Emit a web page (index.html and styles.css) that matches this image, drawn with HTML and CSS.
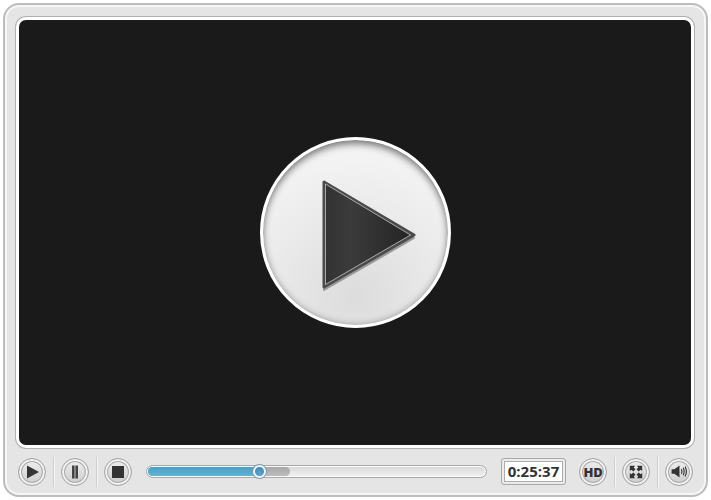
FILE: index.html
```html
<!DOCTYPE html>
<html>
<head>
    <title>Video Player</title>
    <meta charset="UTF-8">
    <link rel="stylesheet" href="styles.css">
</head>
<body>
    <div class="player">
        <div class="screen">
            <div class="big-play">
                <svg viewBox="0 0 100 115" width="100" height="115">
                    <defs>
                        <linearGradient id="tri" x1="0" x2="1" y1="0" y2="0">
                            <stop offset="0" stop-color="#333232"/>
                            <stop offset="0.3" stop-color="#3c3b3b"/>
                            <stop offset="1" stop-color="#242424"/>
                        </linearGradient>
                    </defs>
                    <path d="M4 7 L94 60 L4 112 Z" fill="#9a9a9a" stroke="#9a9a9a" stroke-width="2" stroke-linejoin="round"/>
                    <path d="M4 4 L94 57 L4 109 Z" fill="#4b4b4b" stroke="#4b4b4b" stroke-width="3" stroke-linejoin="round"/>
                    <path d="M5.5 6 L90.5 57 L5.5 106.5 Z" fill="url(#tri)" stroke="#c4c4c4" stroke-width="0.8" stroke-linejoin="round"/>
                </svg>
            </div>
        </div>
        <div class="controls">
            <div class="btn">
                <svg viewBox="0 0 16 16"><path d="M3 1.5 L15 8 L3 14.5 Z" fill="#333"/></svg>
            </div>
            <div class="sep"></div>
            <div class="btn">
                <svg viewBox="0 0 16 16"><path d="M5 1.5 H7.6 V14.5 H5 Z M8.4 1.5 H11 V14.5 H8.4 Z" fill="#444"/></svg>
            </div>
            <div class="sep"></div>
            <div class="btn">
                <svg viewBox="0 0 16 16"><rect x="2" y="2" width="12" height="12" fill="#333"/></svg>
            </div>
            <div class="progress">
                <div class="buffered" style="width: 42%"></div>
                <div class="played" style="width: 33.2%"></div>
                <div class="knob" style="left: 33.2%"></div>
            </div>
            <div class="time">0:25:37</div>
            <div class="btn hd">HD</div>
            <div class="sep"></div>
            <div class="btn">
                <svg viewBox="-1 -1 18 18" fill="#333">
                    <path d="M1 1 H7 L5.4 2.8 L7.4 5 L5 7.4 L2.8 5.4 L1 7 Z"/>
                    <path d="M15 1 H9 L10.6 2.8 L8.6 5 L11 7.4 L13.2 5.4 L15 7 Z"/>
                    <path d="M1 15 H7 L5.4 13.2 L7.4 11 L5 8.6 L2.8 10.6 L1 9 Z"/>
                    <path d="M15 15 H9 L10.6 13.2 L8.6 11 L11 8.6 L13.2 10.6 L15 9 Z"/>
                </svg>
            </div>
            <div class="sep"></div>
            <div class="btn">
                <svg class="wide" viewBox="0 0 18 14">
                    <path d="M0.5 4.5 H3.5 L9 0.5 V13.5 L3.5 9.5 H0.5 Z" fill="#333"/>
                    <path d="M11 4.5 Q12.2 7 11 9.5 M13 3 Q15 7 13 11 M15 1.5 Q17.8 7 15 12.5" fill="none" stroke="#333" stroke-width="1.2"/>
                </svg>
            </div>
        </div>
    </div>
</body>
</html>
```

FILE: styles.css
```css
body {
    margin: 0;
    background-color: #fff;
    font-family: "Open Sans", sans-serif;
}

.player {
    width: 705px;
    height: 494px;
    margin: 3px;
    padding: 12px 12px 0 11px;
    box-sizing: border-box;
    border: 2px solid #bdbdbd;
    border-radius: 16px;
    background-color: #e5e5e5;
    box-shadow: inset 0 0 0 2px #f6f6f6;
}

.screen {
    position: relative;
    height: 425px;
    background-color: #1a1a1a;
    border: 3px solid #fff;
    border-radius: 10px;
    box-shadow: 0 0 0 1px #b0b0b0;
}

.big-play {
    position: absolute;
    left: 241px;
    top: 117px;
    width: 191px;
    height: 191px;
    box-sizing: border-box;
    border: 3px solid #fff;
    border-radius: 50%;
    background: radial-gradient(circle at 50% 85%, #dcdcdc 0%, #e8e8e8 40%, #f4f4f4 80%);
    box-shadow: inset 0 6px 9px -3px #777, inset 0 0 7px #999;
}

.big-play svg {
    position: absolute;
    left: 57px;
    top: 38px;
}

.controls {
    display: flex;
    align-items: center;
    gap: 7px;
    height: 43px;
    margin-top: 2px;
    padding: 0 1px 0 2px;
}

.btn {
    flex: none;
    width: 28px;
    height: 28px;
    box-sizing: border-box;
    border: 1px solid #a4a4a4;
    border-radius: 50%;
    background: linear-gradient(#f0f0f0, #cbcbcb);
    box-shadow: inset 0 0 0 2px #f4f4f4, inset 0 0 0 3px #adadad;
    display: flex;
    align-items: center;
    justify-content: center;
}

.btn svg {
    flex: none;
    width: 16px;
    height: 16px;
}

.btn svg.wide {
    width: 17px;
    height: 13px;
}

.hd {
    color: #333;
    font-size: 13px;
    font-weight: 800;
    letter-spacing: -0.3px;
}

.sep {
    flex: none;
    width: 1px;
    height: 30px;
    background-color: #cfcfcf;
    box-shadow: 1px 0 0 #f6f6f6;
}

.progress {
    position: relative;
    flex: 1;
    height: 13px;
    margin: 0 7px;
    box-sizing: border-box;
    border: 1px solid #a9a9a9;
    border-radius: 7px;
    background: linear-gradient(#d8d8d8, #f2f2f2);
    box-shadow: inset 0 0 0 1px #fafafa;
}

.played,
.buffered {
    position: absolute;
    left: 1px;
    top: 1px;
    bottom: 1px;
    border-radius: 5px;
}

.played {
    background: linear-gradient(#4a9fc4, #5fb4d4);
}

.buffered {
    background: linear-gradient(#a8a8a8, #bcbcbc);
}

.knob {
    position: absolute;
    top: 50%;
    width: 13px;
    height: 13px;
    box-sizing: border-box;
    margin: -6.5px 0 0 -6.5px;
    border: 2px solid #eef4f7;
    border-radius: 50%;
    background: radial-gradient(circle at 50% 70%, #5ea3cc, #3a82b0);
    box-shadow: 0 0 0 1px #7f98a6;
}

.time {
    flex: none;
    width: 65px;
    height: 27px;
    margin-right: 6px;
    box-sizing: border-box;
    border: 1px solid #a8a8a8;
    border-radius: 3px;
    background-color: #fff;
    box-shadow: inset 0 0 0 2px #ececec, inset 0 0 0 3px #acacac;
    color: #333;
    font-size: 15px;
    font-weight: 700;
    line-height: 25px;
    text-align: center;
}
```
